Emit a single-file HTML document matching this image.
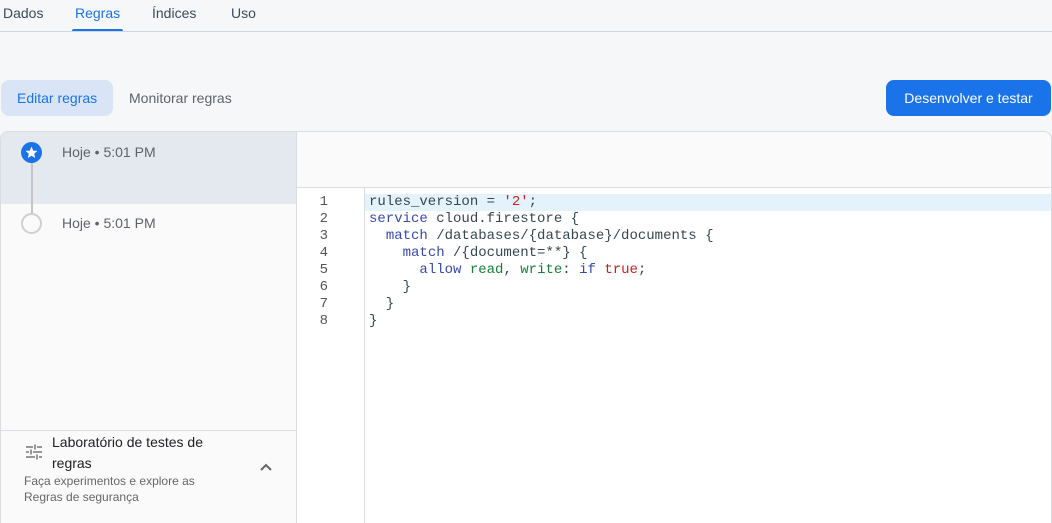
<!DOCTYPE html>
<html><head><meta charset="utf-8"><style>
*{box-sizing:border-box;margin:0;padding:0}
html,body{width:1052px;height:523px;overflow:hidden}
body{background:#f6f7f9;font-family:"Liberation Sans",sans-serif;position:relative}
.a{position:absolute}
.tab{position:absolute;top:5px;font-size:14px;color:#3c4a5c}
.code{font-family:"Liberation Mono",monospace;font-size:14px;line-height:17px;white-space:pre;color:#37474f}
.k{color:#3949ab}.g{color:#188038}.r{color:#c5221f}
</style></head><body>
<div class="tab" style="left:3px">Dados</div>
<div class="tab" style="left:75px;color:#1a73e8">Regras</div>
<div class="tab" style="left:152px">Índices</div>
<div class="tab" style="left:231px">Uso</div>
<div class="a" style="left:72px;top:29px;width:51px;height:3px;background:#1a73e8;border-radius:2px 2px 0 0"></div>
<div class="a" style="left:0;top:31px;width:1052px;height:1px;background:#cfd6df"></div>

<div class="a" style="left:1px;top:80px;width:112px;height:36px;background:#d9e5f6;border-radius:8px;color:#1a73e8;font-size:14px;line-height:36px;padding-left:16px">Editar regras</div>
<div class="a" style="left:129px;top:80px;font-size:14px;line-height:36px;color:#5f6368">Monitorar regras</div>
<div class="a" style="left:886px;top:80px;width:165px;height:36px;background:#1a73e8;border-radius:8px;color:#fff;font-size:14px;line-height:36px;text-align:center">Desenvolver e testar</div>

<div class="a" style="left:0;top:131px;width:1052px;height:392px;border:1px solid #dadce0;border-bottom:none;border-radius:8px 8px 0 0;background:#fafafa;overflow:hidden">
 <div class="a" style="left:0;top:0;width:295px;height:72px;background:#e4e8ef"></div>
 <div class="a" style="left:30px;top:20px;width:2px;height:70px;background:#c4c4c4"></div>
 <svg class="a" style="left:20px;top:10px" width="21" height="21" viewBox="0 0 21 21"><circle cx="10.5" cy="10.5" r="10.5" fill="#1a73e8"/><path d="M10.5 4.5 L12.2 8.6 L16.5 8.9 L13.2 11.7 L14.2 16 L10.5 13.7 L6.8 16 L7.8 11.7 L4.5 8.9 L8.8 8.6 Z" fill="#fff"/></svg>
 <div class="a" style="left:20px;top:81px;width:21px;height:21px;border-radius:50%;border:2px solid #cfcfcf;background:#fafafa"></div>
 <div class="a" style="left:61px;top:12px;font-size:14px;color:#5f6368">Hoje • 5:01 PM</div>
 <div class="a" style="left:61px;top:83px;font-size:14px;color:#5f6368">Hoje • 5:01 PM</div>
 <div class="a" style="left:0;top:298px;width:296px;height:1px;background:#dadce0"></div>
 <svg class="a" style="left:24px;top:312px" width="18" height="16" viewBox="0 0 18 16" stroke="#777" stroke-width="1.5" fill="none"><path d="M1 3H8M12 3H17M10 0.5V5.5M1 8H4M8 8H17M6 5.5V10.5M1 13H10M14 13H17M12 10.5V15.5"/></svg>
 <div class="a" style="left:51px;top:300px;font-size:14px;line-height:21px;color:#202124">Laboratório de testes de<br>regras</div>
 <div class="a" style="left:23px;top:341px;font-size:12px;line-height:16px;color:#666">Faça experimentos e explore as<br>Regras de segurança</div>
 <svg class="a" style="left:258px;top:330px" width="14" height="10"><path d="M2 8 L7 3 L12 8" stroke="#666" stroke-width="2" fill="none"/></svg>
 <div class="a" style="left:295px;top:0;width:1px;height:392px;background:#dadce0"></div>
 <div class="a" style="left:296px;top:55px;width:756px;height:1px;background:#dadce0"></div>
 <div class="a" style="left:296px;top:56px;width:756px;height:336px;background:#fff"></div>
 <div class="a" style="left:363px;top:56px;width:1px;height:336px;background:#dadce0"></div>
 <div class="a" style="left:364px;top:62px;width:688px;height:17px;background:#e3f2fb"></div>
 <div class="a code" style="left:296px;top:62px;width:31px;text-align:right;color:#555">1
2
3
4
5
6
7
8</div>
 <div class="a code" style="left:368px;top:62px">rules_version = <span class="r">'2'</span>;
<span class="k">service</span> cloud.firestore {
  <span class="k">match</span> /databases/{database}/documents {
    <span class="k">match</span> /{document=**} {
      <span class="k">allow</span> <span class="g">read</span>, <span class="g">write</span>: <span class="k">if</span> <span class="r">true</span>;
    }
  }
}</div>
</div>
</body></html>
